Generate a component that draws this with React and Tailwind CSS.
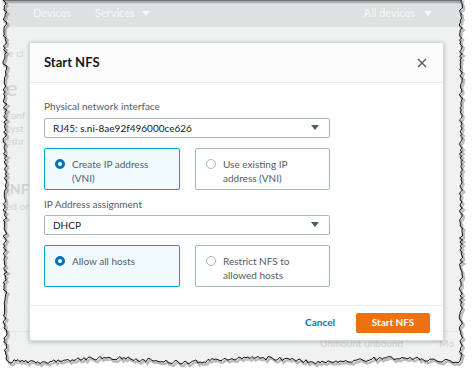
import React from 'react';

const FONT = { fontFamily: 'Lato, "Open Sans", Arial, sans-serif' };

// seeded random so the torn edge looks the same every render
function rng(seed) {
  let s = seed;
  return () => {
    s = (s * 16807) % 2147483647;
    return (s - 1) / 2147483646;
  };
}

function tornPath() {
  const r = rng(42);
  const pts = [];
  for (let y = 0; y <= 356; y += 2) pts.push([5 + (r() - 0.5) * 4, y]);
  for (let x = 6; x <= 460; x += 2) pts.push([x, 360 + Math.sin(x / 23) * 2 + (r() - 0.5) * 4]);
  for (let y = 356; y >= 0; y -= 2) pts.push([461 + (r() - 0.5) * 3.5, y]);
  return 'M' + pts.map(p => p[0].toFixed(1) + ' ' + p[1].toFixed(1)).join(' L') + ' Z';
}

function Caret({ className = '' }) {
  return (
    <svg width="8" height="6" viewBox="0 0 8 6" className={className}>
      <path d="M0 0 H8 L4 5 Z" fill="currentColor" />
    </svg>
  );
}

function Select({ value }) {
  return (
    <div className="flex items-center justify-between h-[20px] w-[286px] border border-[#aab7b8] rounded-[2px] bg-white px-[8px] text-[10px] text-[#16191f]">
      <span>{value}</span>
      <Caret className="text-[#545b64] mr-[2px]" />
    </div>
  );
}

function Tile({ selected, lines, width }) {
  return (
    <div
      className={`flex items-start gap-[7px] h-[42px] rounded-[2px] px-[10px] pt-[8px] ${
        selected ? 'bg-[#f1faff] border border-[#00a1c9]' : 'bg-white border border-[#aab7b8]'
      }`}
      style={{ width }}
    >
      {selected ? (
        <span className="mt-[2px] w-[10px] h-[10px] shrink-0 rounded-full border-[3px] border-[#0073bb] bg-white" />
      ) : (
        <span className="mt-[2px] w-[10px] h-[10px] shrink-0 rounded-full border border-[#aab7b8] bg-white" />
      )}
      <div className="text-[10px] leading-[14px] text-[#545b64]">
        {lines.map(l => (
          <div key={l}>{l}</div>
        ))}
      </div>
    </div>
  );
}

export default function App() {
  const edge = tornPath();

  return (
    <div className="relative w-[474px] h-[376px] overflow-hidden bg-white" style={FONT}>
      {/* page behind the dialog */}
      <div className="flex flex-col w-full h-full">
        <div className="flex items-center h-[27px] bg-[#dde1e2] text-[11px] text-[#f7f8f8] shrink-0">
          <span className="ml-[33px]">Devices</span>
          <span className="ml-[24px] flex items-center gap-[7px]">
            Services <Caret className="text-[#f7f8f8]" />
          </span>
          <span className="ml-auto flex items-center gap-[9px]">
            All devices <Caret className="text-[#f7f8f8]" />
          </span>
          <span className="ml-[26px] mr-[10px]">S</span>
        </div>
        <div className="flex-1 bg-[#f0f1f1] text-[#cfd3d3] pl-[6px]">
          <div className="text-[10px] mt-[19px]">le cl</div>
          <div className="text-[22px] leading-none mt-[16px]">e</div>
          <div className="text-[10px] leading-[13px] mt-[10px]">
            <div>conf</div>
            <div>syst</div>
            <div>ethr</div>
          </div>
          <div className="text-[14px] font-bold mt-[30px]">(NF</div>
          <div className="text-[10px]">ed on</div>
          <div className="mt-[117px] border-t border-[#e3e5e5]" />
          <div className="flex text-[10px] mt-[4px]">
            <span className="ml-[314px]">Unmount unbound</span>
            <span className="ml-[36px]">Mo</span>
          </div>
        </div>
      </div>

      {/* dialog */}
      <div className="absolute left-[29px] top-[42px] w-[415px] h-[299px] flex flex-col bg-white border border-[#d5dbdb] shadow-[0_1px_4px_rgba(0,0,0,0.25)]">
        <div className="flex items-center justify-between h-[40px] px-[14px] border-b border-[#eaeded] bg-[#fcfcfc] shrink-0">
          <span className="text-[13px] font-bold text-[#16191f]">Start NFS</span>
          <svg width="10" height="10" viewBox="0 0 10 10" className="mr-[2px]">
            <path d="M1 1 L9 9 M9 1 L1 9" stroke="#545b64" strokeWidth="1.4" />
          </svg>
        </div>

        <div className="flex flex-col px-[14px] pt-[16px]">
          <div className="text-[10px] text-[#545b64] leading-[14px] mb-[5px]">Physical network interface</div>
          <Select value="RJ45: s.ni-8ae92f496000ce626" />
          <div className="flex gap-[15px] mt-[10px]">
            <Tile selected lines={['Create IP address', '(VNI)']} width={136} />
            <Tile lines={['Use existing IP', 'address (VNI)']} width={135} />
          </div>

          <div className="text-[10px] text-[#545b64] leading-[14px] mt-[7px] mb-[4px]">IP Address assignment</div>
          <Select value="DHCP" />
          <div className="flex gap-[15px] mt-[10px]">
            <Tile selected lines={['Allow all hosts']} width={136} />
            <Tile lines={['Restrict NFS to', 'allowed hosts']} width={135} />
          </div>
        </div>

        <div className="mt-auto flex items-center justify-end gap-[21px] h-[35px] border-t border-[#eaeded] px-[13px] pb-[1px]">
          <span className="text-[10px] font-bold text-[#0073bb]">Cancel</span>
          <span className="flex items-center justify-center w-[74px] h-[20px] rounded-[2px] bg-[#ec7211] text-[10px] font-bold text-white">
            Start NFS
          </span>
        </div>
      </div>

      {/* torn paper edge */}
      <svg width="474" height="376" viewBox="0 0 474 376" className="absolute inset-0 pointer-events-none">
        <path d={'M0 0 H474 V376 H0 Z ' + edge} fill="white" fillRule="evenodd" />
        <path d={edge} fill="none" stroke="#777" strokeWidth="2.5" opacity="0.5" transform="translate(1.5 2)" />
        <path d={edge} fill="none" stroke="#111" strokeWidth="1" />
      </svg>
    </div>
  );
}
